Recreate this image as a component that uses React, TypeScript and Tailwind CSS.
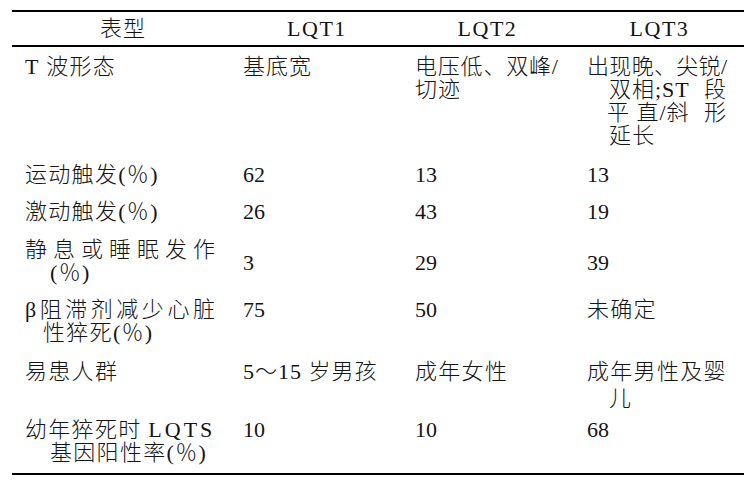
import type { ReactNode } from 'react'

// justified line: tokens spread edge to edge across the given width
function Spread({ tokens, className = '' }: { tokens: string[]; className?: string }) {
  return (
    <div className={`flex justify-between ${className}`}>
      {tokens.map((t, i) => (
        <span key={i} className="whitespace-pre">{t}</span>
      ))}
    </div>
  )
}

function Row({ h, pt, cells, center }: { h: string; pt: string; cells: ReactNode[]; center?: boolean }) {
  return (
    <div className={`grid grid-cols-[220px_170px_171px_171px] ${h}`}>
      <div className={`pl-[13px] ${pt}`}>{cells[0]}</div>
      <div className={`pl-[11px] ${center ? 'flex items-center' : pt}`}>{cells[1]}</div>
      <div className={`pl-[13px] ${center ? 'flex items-center' : pt}`}>{cells[2]}</div>
      <div className={`pl-[14px] ${center ? 'flex items-center' : pt}`}>{cells[3]}</div>
    </div>
  )
}

export default function App() {
  return (
    <div className="w-[747px] h-[484px] bg-white pt-[10px] pl-[12px] font-['Liberation_Serif','Noto_Sans_CJK_SC',serif] font-light text-[22px] leading-[23px] text-[#141414]">
      <div className="w-[732px] border-t-2 border-b-2 border-black">
        {/* header */}
        <div className="grid grid-cols-[220px_170px_171px_171px] h-[35px] items-center text-center border-b-2 border-black">
          <div className="pl-[2px] tracking-[1px]">表型</div>
          <div className="tracking-[1.5px]">LQT1</div>
          <div className="tracking-[1.5px]">LQT2</div>
          <div className="pl-[2px] tracking-[1.5px]">LQT3</div>
        </div>

        <Row
          h="h-[108px]"
          pt="pt-[8px]"
          cells={[
            <div className="tracking-[1.3px]">T 波形态</div>,
            <div className="tracking-[1px]">基底宽</div>,
            <div>
              <div className="tracking-[0.8px]">电压低、双峰/</div>
              <div className="tracking-[1px]">切迹</div>
            </div>,
            <div className="w-[140px]">
              <Spread tokens={['出', '现', '晚', '、', '尖', '锐', '/']} />
              <Spread className="pl-[22px] tracking-[1px]" tokens={['双相;ST', '段']} />
              <Spread className="pl-[20px] tracking-[1px]" tokens={['平 直/斜', '形']} />
              <div className="pl-[22px] tracking-[1.3px]">延长</div>
            </div>,
          ]}
        />

        <Row
          h="h-[38px]"
          pt="pt-[8px]"
          cells={[
            <div className="tracking-[1.3px]">运动触发(％)</div>,
            <div>62</div>,
            <div>13</div>,
            <div>13</div>,
          ]}
        />

        <Row
          h="h-[38px]"
          pt="pt-[7px]"
          cells={[
            <div className="tracking-[1.3px]">激动触发(％)</div>,
            <div>26</div>,
            <div>43</div>,
            <div>19</div>,
          ]}
        />

        <Row
          h="h-[60px]"
          pt="pt-[7px]"
          center
          cells={[
            <div className="w-[190px]">
              <Spread tokens={['静', '息', '或', '睡', '眠', '发', '作']} />
              <div className="pl-[25px] tracking-[1.3px]">(％)</div>
            </div>,
            <div className="pt-[2px]">3</div>,
            <div className="pt-[2px]">29</div>,
            <div className="pt-[2px]">39</div>,
          ]}
        />

        <Row
          h="h-[61px]"
          pt="pt-[7px]"
          cells={[
            <div className="w-[190px]">
              <Spread tokens={['β', '阻', '滞', '剂', '减', '少', '心', '脏']} />
              <div className="pl-[18px] tracking-[1.3px]">性猝死(％)</div>
            </div>,
            <div>75</div>,
            <div>50</div>,
            <div className="tracking-[1.3px]">未确定</div>,
          ]}
        />

        <Row
          h="h-[59px]"
          pt="pt-[8px]"
          cells={[
            <div className="tracking-[1.3px]">易患人群</div>,
            <div className="tracking-[1px]">5～15 岁男孩</div>,
            <div className="tracking-[1.3px]">成年女性</div>,
            <div className="w-[140px]">
              <div className="tracking-[1.3px]">成年男性及婴</div>
              <div className="pl-[22px] pt-[4px]">儿</div>
            </div>,
          ]}
        />

        <Row
          h="h-[62px]"
          pt="pt-[7px]"
          cells={[
            <div>
              <div className="tracking-[1.3px]">
                幼年猝死时 <span className="tracking-[3px]">LQTS</span>
              </div>
              <div className="pl-[25px] tracking-[1.3px]">基因阳性率(％)</div>
            </div>,
            <div>10</div>,
            <div>10</div>,
            <div>68</div>,
          ]}
        />
      </div>
    </div>
  )
}
